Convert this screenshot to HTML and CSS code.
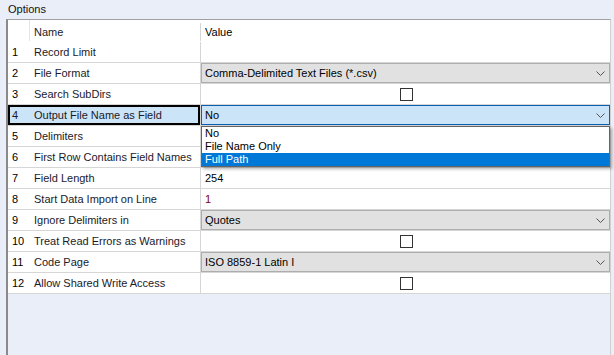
FILE: index.html
```html
<!DOCTYPE html>
<html lang="en">
<head>
  <meta charset="UTF-8" />
  <title>Options</title>
  <link rel="stylesheet" href="styles.css">
</head>
<body>
  <div class="title">Options</div>
  <div class="panel">
    <div class="grid">
      <div class="row head">
        <div class="key"><div class="num"></div><div class="name">Name</div></div>
        <div class="val">Value</div>
      </div>
      <div class="row first">
        <div class="key"><div class="num">1</div><div class="name">Record Limit</div></div>
        <div class="val"></div>
      </div>
      <div class="row">
        <div class="key"><div class="num">2</div><div class="name">File Format</div></div>
        <div class="val">
          <div class="combo">Comma-Delimited Text Files (*.csv)<svg class="chev" width="9" height="5" viewBox="0 0 9 5"><path d="M0.5 0.5 L4.5 4.5 L8.5 0.5" /></svg></div>
        </div>
      </div>
      <div class="row">
        <div class="key"><div class="num">3</div><div class="name">Search SubDirs</div></div>
        <div class="val check"><span class="box"></span></div>
      </div>
      <div class="row sel">
        <div class="key"><div class="num">4</div><div class="name">Output File Name as Field</div></div>
        <div class="val">
          <div class="combo open">No<svg class="chev" width="9" height="5" viewBox="0 0 9 5"><path d="M0.5 0.5 L4.5 4.5 L8.5 0.5" /></svg></div>
          <ul class="list">
            <li>No</li>
            <li>File Name Only</li>
            <li class="hi">Full Path</li>
          </ul>
        </div>
      </div>
      <div class="row">
        <div class="key"><div class="num">5</div><div class="name">Delimiters</div></div>
        <div class="val"></div>
      </div>
      <div class="row">
        <div class="key"><div class="num">6</div><div class="name">First Row Contains Field Names</div></div>
        <div class="val"></div>
      </div>
      <div class="row">
        <div class="key"><div class="num">7</div><div class="name">Field Length</div></div>
        <div class="val">254</div>
      </div>
      <div class="row">
        <div class="key"><div class="num">8</div><div class="name">Start Data Import on Line</div></div>
        <div class="val red">1</div>
      </div>
      <div class="row">
        <div class="key"><div class="num">9</div><div class="name">Ignore Delimiters in</div></div>
        <div class="val">
          <div class="combo">Quotes<svg class="chev" width="9" height="5" viewBox="0 0 9 5"><path d="M0.5 0.5 L4.5 4.5 L8.5 0.5" /></svg></div>
        </div>
      </div>
      <div class="row">
        <div class="key"><div class="num">10</div><div class="name">Treat Read Errors as Warnings</div></div>
        <div class="val check"><span class="box"></span></div>
      </div>
      <div class="row">
        <div class="key"><div class="num">11</div><div class="name">Code Page</div></div>
        <div class="val">
          <div class="combo">ISO 8859-1 Latin I<svg class="chev" width="9" height="5" viewBox="0 0 9 5"><path d="M0.5 0.5 L4.5 4.5 L8.5 0.5" /></svg></div>
        </div>
      </div>
      <div class="row last">
        <div class="key"><div class="num">12</div><div class="name">Allow Shared Write Access</div></div>
        <div class="val check"><span class="box"></span></div>
      </div>
    </div>
  </div>
</body>
</html>
```

FILE: styles.css
```css
html, body {
  margin: 0;
  padding: 0;
  height: 100%;
  background: #e9eef8;
  overflow: hidden;
  font-family: 'Liberation Sans', Arial, sans-serif;
  font-size: 11px;
  color: #000;
}

body {
  display: flex;
  flex-direction: column;
}

.title {
  height: 19px;
  line-height: 19px;
  padding-left: 8px;
  color: #111;
}

.panel {
  flex: 1;
  margin-left: 6px;
  width: 602px;
  border-top: 1px solid #a0a0a0;
  border-left: 2px solid #8a8a8a;
  border-right: 1px solid #d0d0d0;
}

.grid {
  background: #fff;
}

.row {
  display: flex;
  height: 20px;
  line-height: 20px;
  border-top: 1px solid #d6d6d6;
}

.row.head {
  height: 18px;
  padding-top: 3px;
  line-height: 18px;
  border-top: none;
}

.row.first {
  border-top-color: #fff;
}

.row.last {
  border-bottom: 1px solid #d6d6d6;
}

.key {
  display: flex;
  width: 192px;
  flex: none;
  border-right: 1px solid #d6d6d6;
  color: #1a1a2a;
}

.num {
  width: 18px;
  padding-left: 4px;
  color: #000;
}

.head .num {
  border-right: 1px solid #e4e4e4;
  margin-top: -3px;
  width: 17px;
}

.name {
  padding-left: 4px;
  white-space: nowrap;
}

.val {
  flex: 1;
  padding-left: 4px;
  position: relative;
}

.val.red {
  color: #800000;
}

.row.sel .key {
  background: #cce4f7;
  box-shadow: inset 0 0 0 2px #000;
}

.row.sel .num,
.row.sel .name {
  color: #1a1a2a;
}

.val:has(.combo) {
  padding-left: 0;
}

.combo {
  display: flex;
  align-items: center;
  height: 18px;
  padding-left: 3px;
  background: #e1e1e1;
  border: 1px solid #adadad;
}

.combo.open {
  background: #cce4f7;
  border-color: #0a5fae;
}

.chev {
  margin-left: auto;
  margin-right: 4px;
}

.chev path {
  fill: none;
  stroke: #555;
  stroke-width: 1;
}

.check {
  display: flex;
  justify-content: center;
  align-items: center;
  padding-left: 0;
}

.box {
  width: 11px;
  height: 11px;
  border: 1px solid #333;
  background: #fff;
  margin-left: 1px;
}

.list {
  position: absolute;
  top: 21px;
  left: 0;
  right: 0;
  margin: 0;
  padding: 0;
  list-style: none;
  background: #fff;
  border: 1px solid #646464;
  box-shadow: 2px 2px 3px rgba(0, 0, 0, 0.3);
  z-index: 2;
}

.list li {
  height: 13px;
  line-height: 13px;
  padding-left: 3px;
}

.list li.hi {
  background: #0078d7;
  color: #fff;
}
```
